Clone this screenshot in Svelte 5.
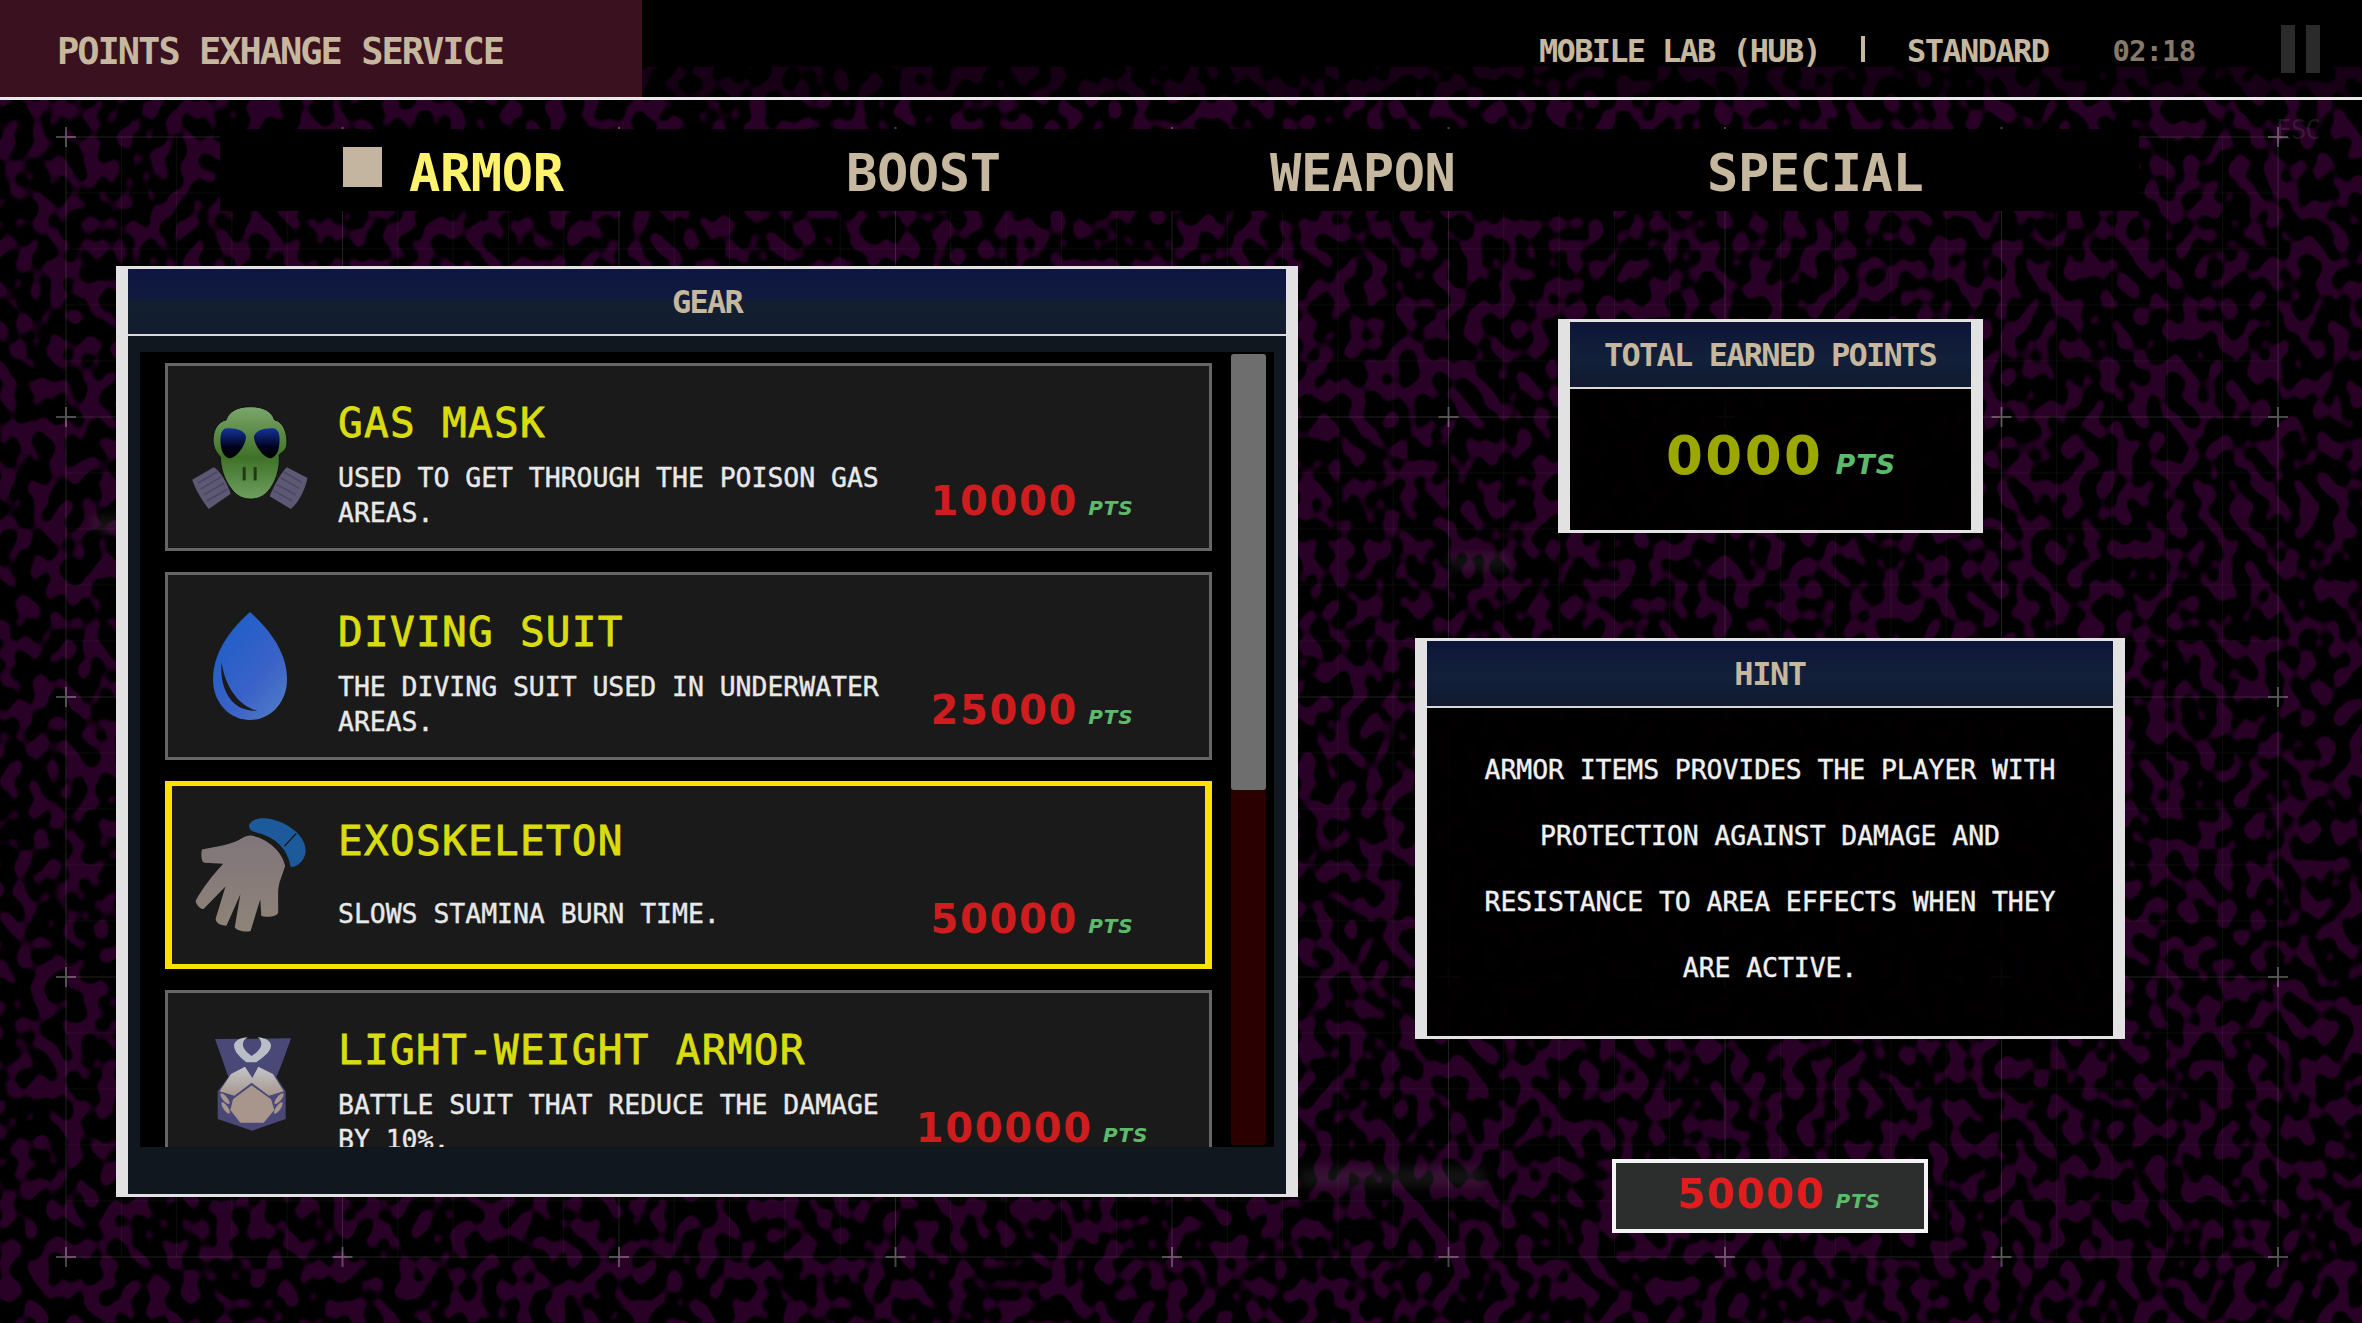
<script>
  const tabs = ["ARMOR", "BOOST", "WEAPON", "SPECIAL"];
  const gear = [
    { icon: "mask", name: "GAS MASK", text: "USED TO GET THROUGH THE POISON GAS AREAS.", price: "10000" },
    { icon: "drop", name: "DIVING SUIT", text: "THE DIVING SUIT USED IN UNDERWATER AREAS.", price: "25000" },
    { icon: "hand", name: "EXOSKELETON", text: "SLOWS STAMINA BURN TIME.", price: "50000", selected: true },
    { icon: "armor", name: "LIGHT-WEIGHT ARMOR", text: "BATTLE SUIT THAT REDUCE THE DAMAGE BY 10%.", price: "100000" }
  ];

  // backdrop grid: 8x4 major cells, each split in 5
  const stepX = 276.5, stepY = 280, x0 = 66, y0 = 137;
  const cols = Array.from({ length: 41 }, (_, i) => x0 + (i * stepX) / 5);
  const rows = Array.from({ length: 21 }, (_, i) => y0 + (i * stepY) / 5);
  const right = x0 + 8 * stepX, bottom = y0 + 4 * stepY;
  const crossX = cols.filter((_, i) => i % 5 === 0);
  const crossY = rows.filter((_, i) => i % 5 === 0);
</script>

<div class="screen">
  <svg class="backdrop" width="2362" height="1323" aria-hidden="true">
    <defs>
      <filter id="blobs" x="0" y="0" width="100%" height="100%" color-interpolation-filters="sRGB">
        <feTurbulence type="fractalNoise" baseFrequency="0.06 0.05" numOctaves="1" seed="7" />
        <feColorMatrix values="0 0 0 0 0.16  0 0 0 0 0  0 0 0 0 0.15  14 0 0 0 -6.9" />
      </filter>
    </defs>
    <rect width="2362" height="1323" filter="url(#blobs)" />
    {#each cols as x, i}
      <line x1={x} x2={x} y1={y0} y2={bottom} class={i % 5 === 0 ? "major" : "minor"} />
    {/each}
    {#each rows as y, i}
      <line x1={x0} x2={right} y1={y} y2={y} class={i % 5 === 0 ? "major" : "minor"} />
    {/each}
    {#each crossX as x}
      {#each crossY as y}
        <path d="M{x - 10} {y}H{x + 10}M{x} {y - 10}V{y + 10}" class="cross" />
      {/each}
    {/each}
  </svg>
  <div class="ghost ghost-a"></div>
  <div class="ghost ghost-b"></div>
  <div class="ghost ghost-c"></div>
  <span class="esc">ESC</span>

  <header class="topbar">
    <div class="service">POINTS EXHANGE SERVICE</div>
    <div class="status">
      <span class="place">MOBILE LAB (HUB)</span>
      <span class="sep"></span>
      <span class="place mode">STANDARD</span>
      <span class="clock">02:18</span>
      <span class="pause"><i></i><i></i></span>
    </div>
  </header>

  <nav class="tabs">
    {#each tabs as tab, i}
      <div class="tab" class:active={i === 0}>
        {#if i === 0}<span class="marker"></span>{/if}
        {tab}
      </div>
    {/each}
  </nav>

  <main class="main">
    <section class="frame gear">
      <h2 class="frame-head gear-head">GEAR</h2>
      <div class="gear-body">
        <div class="list">
          <div class="cards">
            {#each gear as item}
              <article class="card" class:selected={item.selected}>
                <div class="icon">
                  {#if item.icon === "mask"}
                    <svg width="116" height="103" viewBox="70 108 348 310">
                      <defs>
                        <linearGradient id="maskSkin" x1="0" y1="0" x2="0" y2="1">
                          <stop offset="0" stop-color="#7ca66c" />
                          <stop offset="0.55" stop-color="#3f7228" />
                          <stop offset="1" stop-color="#6f9f60" />
                        </linearGradient>
                        <linearGradient id="maskEye" x1="0" y1="0" x2="0" y2="1">
                          <stop offset="0" stop-color="#14339a" />
                          <stop offset="0.65" stop-color="#00001a" />
                          <stop offset="1" stop-color="#000" />
                        </linearGradient>
                      </defs>
                      <path d="M70 330L135 292C152 300 176 340 186 372L120 418C100 395 78 355 70 330Z" fill="#5d5874" />
                      <path d="M355 292L417 325C410 360 390 400 367 418L303 380C315 350 335 310 355 292Z" fill="#5d5874" />
                      <path d="M88 340L146 306M96 358L156 322M105 376L166 340M114 394L176 358M400 338L346 306M392 356L336 324M382 376L324 344M372 394L314 362" stroke="#4c4862" stroke-width="5" fill="none" />
                      <path d="M245 110C285 110 310 125 318 150C345 155 357 190 355 225C352 245 335 250 332 255C335 300 320 340 298 365C280 385 260 388 245 388C225 388 205 380 190 360C165 330 155 290 155 262C140 245 132 230 133 205C135 175 150 155 172 150C180 125 205 110 245 110Z" fill="url(#maskSkin)" stroke="#101010" stroke-width="3" />
                      <path d="M170 176C195 172 228 180 232 200C232 225 205 262 185 265C165 265 155 240 155 210C155 190 160 180 170 176Z" fill="url(#maskEye)" />
                      <path d="M318 176C293 172 260 180 256 200C256 225 283 262 303 265C323 265 333 240 333 210C333 190 328 180 318 176Z" fill="url(#maskEye)" />
                      <rect x="222" y="292" width="9" height="40" fill="#1f3a12" />
                      <rect x="255" y="292" width="9" height="40" fill="#1f3a12" />
                    </svg>
                  {:else if item.icon === "drop"}
                    <svg width="74" height="108" viewBox="132 728 222 324">
                      <defs>
                        <linearGradient id="dropFill" x1="0.2" y1="0.1" x2="0.9" y2="0.95">
                          <stop offset="0" stop-color="#1f5fc8" />
                          <stop offset="0.6" stop-color="#3a62c8" />
                          <stop offset="1" stop-color="#4f7ac6" />
                        </linearGradient>
                      </defs>
                      <path d="M243 728C290 770 354 840 354 930C354 1000 305 1052 243 1052C181 1052 132 1000 132 930C132 840 196 770 243 728Z" fill="url(#dropFill)" />
                      <path d="M158 880C150 960 190 1030 265 1024C215 1012 170 960 158 880Z" fill="#1a1a1a" />
                    </svg>
                  {:else if item.icon === "hand"}
                    <svg width="111" height="118" viewBox="80 85 335 354">
                      <defs>
                        <linearGradient id="handSkin" x1="0" y1="0" x2="0" y2="1">
                          <stop offset="0" stop-color="#80757a" />
                          <stop offset="1" stop-color="#8f8478" />
                        </linearGradient>
                      </defs>
                      <path d="M243 112C255 85 300 85 345 105C385 125 415 155 414 190C412 220 385 240 368 237C365 200 335 150 270 135C250 130 243 125 243 112Z" fill="#1d5a9c" />
                      <path d="M350 175L385 137" stroke="#141414" stroke-width="4" />
                      <path d="M245 143C290 145 345 190 352 235L335 285C328 310 332 340 331 375C328 390 290 390 280 385L277 335L248 430C235 437 205 430 200 420L217 320L175 415C160 415 145 410 142 395L172 297L105 365C95 365 82 350 82 340C100 305 135 260 165 228L110 225C100 225 97 205 101 185C140 178 190 170 215 155C225 148 235 144 245 143Z" fill="url(#handSkin)" />
                    </svg>
                  {:else}
                    <svg class="armor-icon" width="76" height="94" viewBox="138 750 228 280">
                      <defs>
                        <linearGradient id="armorPlate" x1="0" y1="0" x2="0" y2="1">
                          <stop offset="0" stop-color="#c4c5ca" />
                          <stop offset="1" stop-color="#a7968c" />
                        </linearGradient>
                      </defs>
                      <path d="M138 755L366 753C350 800 335 840 322 870L350 912V995L250 1030L146 995V912L178 870C165 830 150 790 138 755Z" fill="#4a4877" />
                      <path d="M228 838L250 872L268 838L312 860L344 912L300 925L248 886L196 925L152 912L186 860Z" fill="url(#armorPlate)" />
                      <path d="M195 772C200 757 215 752 236 750C216 762 214 782 248 806C284 782 282 762 266 750C290 752 305 760 306 775C305 795 280 810 262 825H232C215 810 195 795 195 772Z" fill="#b9bdc6" />
                      <path d="M248 894L306 936L316 968L284 1006H214L184 968L192 936Z" fill="#a8968c" />
                      <ellipse cx="168" cy="934" rx="7" ry="20" transform="rotate(-40 168 934)" fill="#a8968c" />
                      <ellipse cx="170" cy="962" rx="7" ry="20" transform="rotate(-35 170 962)" fill="#a8968c" />
                      <ellipse cx="330" cy="934" rx="7" ry="20" transform="rotate(40 330 934)" fill="#a8968c" />
                      <ellipse cx="328" cy="962" rx="7" ry="20" transform="rotate(35 328 962)" fill="#a8968c" />
                    </svg>
                  {/if}
                </div>
                <div class="copy">
                  <h3>{item.name}</h3>
                  <p>{item.text}</p>
                </div>
                <div class="price">
                  <span class="amount">{item.price}</span>
                  <span class="pts">PTS</span>
                </div>
              </article>
            {/each}
          </div>
          <div class="scroll"><div class="thumb"></div></div>
        </div>
      </div>
    </section>

    <aside class="side">
      <section class="frame total">
        <h2 class="frame-head total-head">TOTAL EARNED POINTS</h2>
        <div class="total-body">
          <span class="earned">0000</span>
          <span class="pts big">PTS</span>
        </div>
      </section>

      <section class="frame hint">
        <h2 class="frame-head hint-head">HINT</h2>
        <p>ARMOR ITEMS PROVIDES THE PLAYER WITH PROTECTION AGAINST DAMAGE AND RESISTANCE TO AREA EFFECTS WHEN THEY ARE ACTIVE.</p>
      </section>

      <div class="cost">
        <span class="amount">50000</span>
        <span class="pts">PTS</span>
      </div>
    </aside>
  </main>
</div>

<style>
  :global(body) {
    margin: 0;
    background: #000;
  }
  .screen {
    position: relative;
    width: 2362px;
    height: 1323px;
    overflow: hidden;
    background: #000;
    font-family: "DejaVu Sans Mono", monospace;
    color: #c6b79f;
  }
  .backdrop {
    position: absolute;
    inset: 0;
  }
  .major {
    stroke: rgba(255, 255, 255, 0.13);
    stroke-width: 1;
  }
  .minor {
    stroke: rgba(255, 255, 255, 0.05);
    stroke-width: 1;
  }
  .cross {
    stroke: rgba(255, 255, 255, 0.28);
    stroke-width: 2;
    fill: none;
  }
  .ghost {
    position: absolute;
    background: rgba(255, 255, 255, 0.08);
    filter: blur(6px);
  }
  .ghost-a {
    left: 1300px;
    top: 1168px;
    width: 185px;
    height: 18px;
  }
  .ghost-b {
    left: 1450px;
    top: 555px;
    width: 60px;
    height: 14px;
  }
  .ghost-c {
    left: 92px;
    top: 516px;
    width: 32px;
    height: 14px;
  }
  .esc {
    position: absolute;
    left: 2276px;
    top: 115px;
    font-size: 26px;
    letter-spacing: -1px;
    color: rgba(255, 255, 255, 0.1);
  }

  .topbar {
    position: relative;
    display: flex;
    height: 97px;
    border-bottom: 3px solid #e9e9e9;
  }
  .service {
    width: 642px;
    box-sizing: border-box;
    padding: 29px 0 0 57px;
    background: #3a111e;
    font-size: 37px;
    line-height: 46px;
    letter-spacing: -2px;
    font-weight: 700;
    white-space: nowrap;
  }
  .status {
    flex: 1;
    display: flex;
    align-items: flex-start;
    padding: 31px 0 0 897px;
    background: linear-gradient(#000 66px, rgba(0, 0, 0, 0.45) 67px);
  }
  .place {
    font-size: 32px;
    line-height: 40px;
    letter-spacing: -1.7px;
    font-weight: 700;
    white-space: nowrap;
  }
  .mode {
    margin-left: 42px;
    letter-spacing: -1.6px;
  }
  .sep {
    width: 4px;
    height: 26px;
    margin: 5px 0 0 41px;
    background: #c6b79f;
  }
  .clock {
    margin-left: 64px;
    font-size: 29px;
    line-height: 40px;
    letter-spacing: -0.9px;
    font-weight: 700;
    color: #84796a;
  }
  .pause {
    display: flex;
    gap: 11px;
    margin: -6px 0 0 86px;
  }
  .pause i {
    width: 14px;
    height: 48px;
    background: #2a2a2a;
  }

  .tabs {
    position: relative;
    display: grid;
    grid-template-columns: 503px 424px 437px 1fr;
    align-items: center;
    width: 1919px;
    height: 82px;
    box-sizing: border-box;
    margin: 29px 0 0 220px;
    padding: 0 0 0 123px;
    background: #000;
  }
  .tab {
    display: flex;
    align-items: center;
    gap: 29px;
    padding-top: 6px;
    font-size: 52px;
    line-height: 76px;
    font-weight: 700;
    letter-spacing: -0.4px;
  }
  .tab.active {
    color: #fff36e;
  }
  .marker {
    width: 39px;
    height: 40px;
    margin-top: -12px;
    margin-right: -2px;
    background: #c4b5a0;
  }

  .main {
    position: relative;
    display: flex;
    margin-top: 55px;
    padding-left: 116px;
  }
  .frame {
    box-sizing: border-box;
    border-style: solid;
    border-color: #e2e2e2;
    border-width: 3px 12px;
    background: rgba(0, 0, 0, 0.93);
  }
  .frame-head {
    margin: 0;
    display: flex;
    align-items: center;
    justify-content: center;
    height: 65px;
    border-bottom: 2px solid #d8d8d8;
    font-weight: 700;
    background: linear-gradient(#0d1538, #12203a 55%, #101a30);
    white-space: nowrap;
  }
  .gear {
    width: 1182px;
    height: 931px;
    background: #11171e;
  }
  .gear-head {
    font-size: 32px;
    letter-spacing: -1.8px;
    background: linear-gradient(#0e1640 0%, #0f1a3e 45%, #131f30 50%, #121c2c);
  }
  .gear-body {
    padding: 16px 12px 0;
  }
  .list {
    display: flex;
    height: 795px;
    box-sizing: border-box;
    padding: 11px 7px 0 25px;
    overflow: hidden;
    background: #000;
  }
  .cards {
    display: flex;
    flex-direction: column;
    gap: 21px;
    width: 1047px;
  }
  .card {
    flex: 0 0 188px;
    box-sizing: border-box;
    display: grid;
    grid-template-columns: 170px 560px 268px;
    height: 188px;
    border: 3px solid #666;
    background: #1a1a1a;
  }
  .card.selected {
    border-color: #f8e300;
    box-shadow: inset 4px 2px 0 #f8e300, inset -4px -2px 0 #f8e300;
  }
  .icon {
    display: flex;
    align-items: center;
    justify-content: center;
    padding-right: 6px;
  }
  .armor-icon {
    margin-left: 5px;
  }
  .copy h3 {
    margin: 32px 0 0;
    font-size: 41px;
    line-height: 50px;
    letter-spacing: 1.3px;
    font-weight: 400;
    color: #d9dd10;
    -webkit-text-stroke: 0.8px #d9dd10;
    white-space: nowrap;
  }
  .copy p {
    display: flex;
    align-items: center;
    height: 70px;
    margin: 12px 0 0;
    font-size: 26.5px;
    line-height: 35px;
    letter-spacing: -0.05px;
    color: #e8e8e8;
    -webkit-text-stroke: 0.4px #e8e8e8;
  }
  .price {
    display: flex;
    align-items: baseline;
    justify-content: center;
    gap: 10px;
    padding-top: 118px;
    font-family: "DejaVu Sans", sans-serif;
    font-weight: 700;
    line-height: 34px;
  }
  .amount {
    font-size: 40px;
    letter-spacing: 1.7px;
    color: #cf1c1f;
  }
  .pts {
    font-size: 20px;
    font-style: italic;
    color: #5cba6b;
    letter-spacing: 0.9px;
  }
  .scroll {
    position: relative;
    flex: 0 0 35px;
    height: 791px;
    margin: -9px 0 0 19px;
    border-radius: 3px;
    background: #2a0000;
  }
  .thumb {
    height: 436px;
    border-radius: 3px;
    background: #6e6e6e;
  }

  .side {
    display: flex;
    flex-direction: column;
    align-items: center;
    width: 944px;
    padding-top: 53px;
  }
  .total {
    width: 425px;
    height: 214px;
  }
  .total-head {
    font-size: 32px;
    letter-spacing: -1.8px;
  }
  .total-body {
    display: flex;
    align-items: baseline;
    justify-content: center;
    gap: 12px;
    padding: 36px 0 0 22px;
    font-family: "DejaVu Sans", sans-serif;
    font-weight: 700;
  }
  .earned {
    font-size: 53px;
    letter-spacing: 2.5px;
    color: #9aa800;
  }
  .pts.big {
    font-size: 27px;
    letter-spacing: 1px;
  }
  .hint {
    width: 710px;
    height: 401px;
    margin-top: 105px;
  }
  .hint-head {
    font-size: 32px;
    letter-spacing: -1.4px;
  }
  .hint p {
    margin: 29px 0 0;
    padding: 0 40px;
    text-align: center;
    font-size: 26.5px;
    line-height: 66px;
    letter-spacing: -0.1px;
    color: #f0f0f0;
    -webkit-text-stroke: 0.4px #f0f0f0;
  }
  .cost {
    display: flex;
    align-items: baseline;
    justify-content: center;
    gap: 10px;
    box-sizing: border-box;
    width: 316px;
    height: 74px;
    margin-top: 120px;
    padding: 6px 0 0 18px;
    border: 4px solid #f4f4f4;
    background: #2c2e2e;
    font-family: "DejaVu Sans", sans-serif;
    font-weight: 700;
    line-height: 50px;
  }
  .cost .amount {
    color: #e01c1c;
    letter-spacing: 1.8px;
  }
</style>
